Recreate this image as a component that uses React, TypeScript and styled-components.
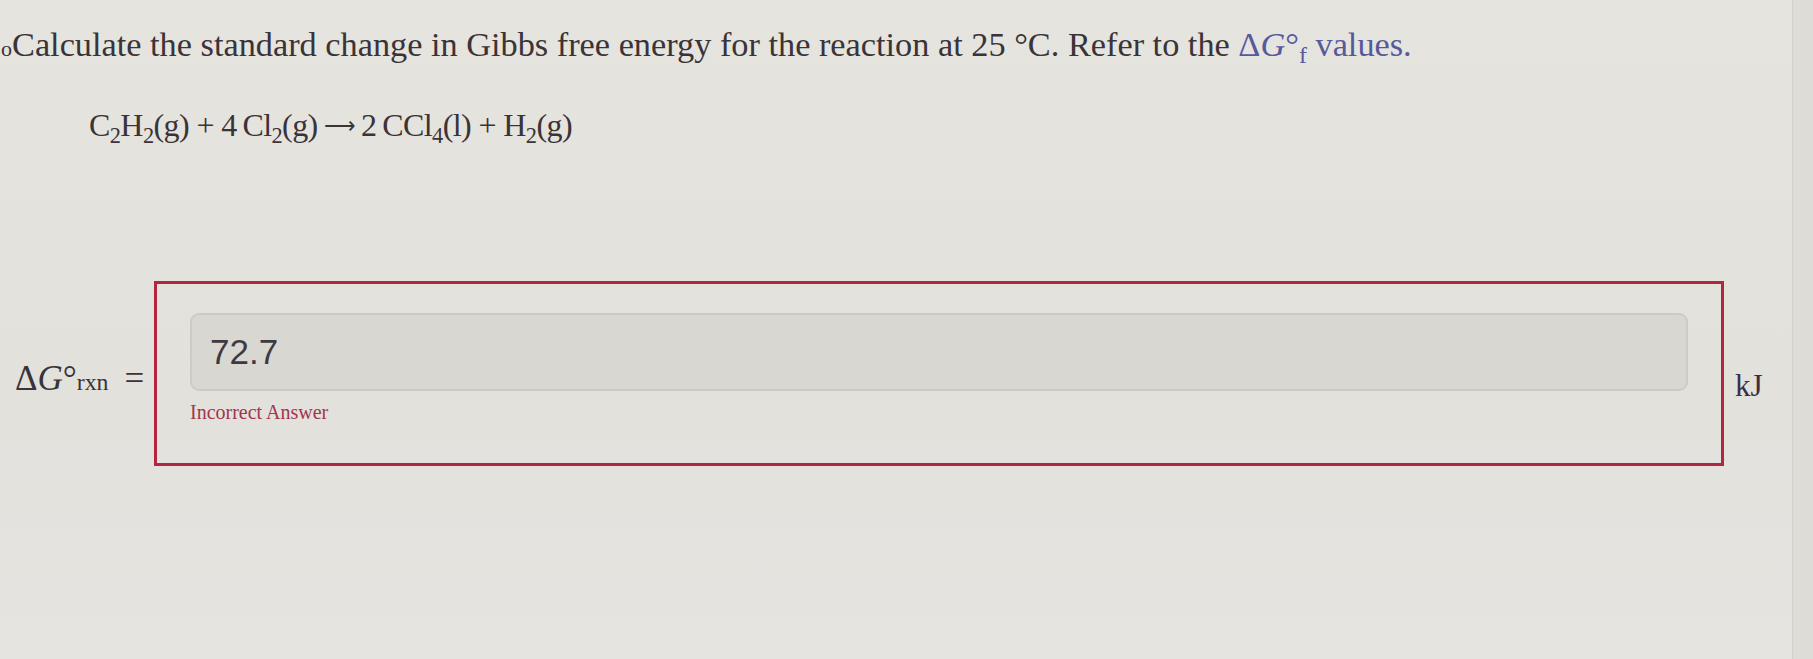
import React from 'react'
import styled, { createGlobalStyle } from 'styled-components'

const GlobalStyle = createGlobalStyle`
  html, body {
    margin: 0;
    padding: 0;
    background: #e4e2dd;
  }
  body {
    font-family: "Liberation Serif", "Times New Roman", serif;
    color: #3a3337;
  }
`

const Screen = styled.div`
  display: flex;
  width: 1813px;
  height: 659px;
  overflow: hidden;
  background: linear-gradient(180deg, #e6e4df 0%, #e3e1dc 60%, #e6e4e0 100%);
`

const Main = styled.div`
  flex: 1;
  display: flex;
  flex-direction: column;
  padding: 24px 0 0 0;
`

const Bezel = styled.div`
  width: 20px;
  border-left: 1px solid #d2d0ca;
  background: #dedcd6;
`

const Prompt = styled.div`
  display: flex;
  align-items: baseline;
  font-size: 34.3px;
  line-height: 40px;
  white-space: nowrap;
`

const Marker = styled.span`
  display: inline-block;
  width: 12px;
  overflow: hidden;
  direction: rtl;
  font-size: 22px;
`

const Term = styled.span`
  color: #56599c;
`

const Italic = styled.i`
  font-style: italic;
`

const Sub = styled.sub`
  font-size: 0.7em;
  vertical-align: -0.3em;
  line-height: 0;
`

const Equation = styled.div`
  margin: 36px 0 0 89px;
  font-size: 32px;
  letter-spacing: -0.6px;
  line-height: 40px;
  white-space: nowrap;
`

const Arrow = styled.span`
  display: inline-block;
  margin: 0 6px;
  font-size: 22px;
  vertical-align: 3px;
`

const AnswerRow = styled.div`
  display: flex;
  align-items: center;
  margin-top: 135px;
`

const Label = styled.div`
  width: 154px;
  padding-left: 15px;
  box-sizing: border-box;
  display: flex;
  align-items: baseline;
  font-size: 35px;
  white-space: nowrap;
  margin-top: 10px;
`

const RxnSub = styled.sub`
  font-size: 0.68em;
  vertical-align: -0.4em;
  line-height: 0;
`

const Equals = styled.span`
  margin-left: 16px;
`

const AnswerBox = styled.div`
  width: 1570px;
  height: 185px;
  box-sizing: border-box;
  border: 3px solid #b2273f;
  padding: 29px 33px 0 33px;
  display: flex;
  flex-direction: column;
`

const Field = styled.div`
  height: 78px;
  box-sizing: border-box;
  border: 2px solid #cecbc6;
  border-radius: 9px;
  background: #d9d7d2;
  display: flex;
  align-items: center;
  padding-left: 18px;
  font-family: "Liberation Sans", Arial, sans-serif;
  font-size: 35px;
  color: #3d3a40;
`

const Feedback = styled.div`
  margin-top: 10px;
  font-size: 20px;
  color: #a2344b;
`

const Unit = styled.div`
  margin: 24px 0 0 11px;
  font-size: 31px;
  color: #3a3046;
`

export default function App() {
  return (
    <>
      <GlobalStyle />
      <Screen>
        <Main>
          <Prompt>
            <Marker>o</Marker>
            <span>
              Calculate the standard change in Gibbs free energy for the reaction at 25&nbsp;°C. Refer to the{' '}
              <Term>
                Δ<Italic>G</Italic>°<Sub>f</Sub> values.
              </Term>
            </span>
          </Prompt>

          <Equation>
            C<Sub>2</Sub>H<Sub>2</Sub>(g) + 4&thinsp;Cl<Sub>2</Sub>(g)
            <Arrow>⟶</Arrow>
            2&thinsp;CCl<Sub>4</Sub>(l) + H<Sub>2</Sub>(g)
          </Equation>

          <AnswerRow>
            <Label>
              Δ<Italic>G</Italic>°<RxnSub>rxn</RxnSub>
              <Equals>=</Equals>
            </Label>
            <AnswerBox>
              <Field>72.7</Field>
              <Feedback>Incorrect Answer</Feedback>
            </AnswerBox>
            <Unit>kJ</Unit>
          </AnswerRow>
        </Main>
        <Bezel />
      </Screen>
    </>
  )
}
